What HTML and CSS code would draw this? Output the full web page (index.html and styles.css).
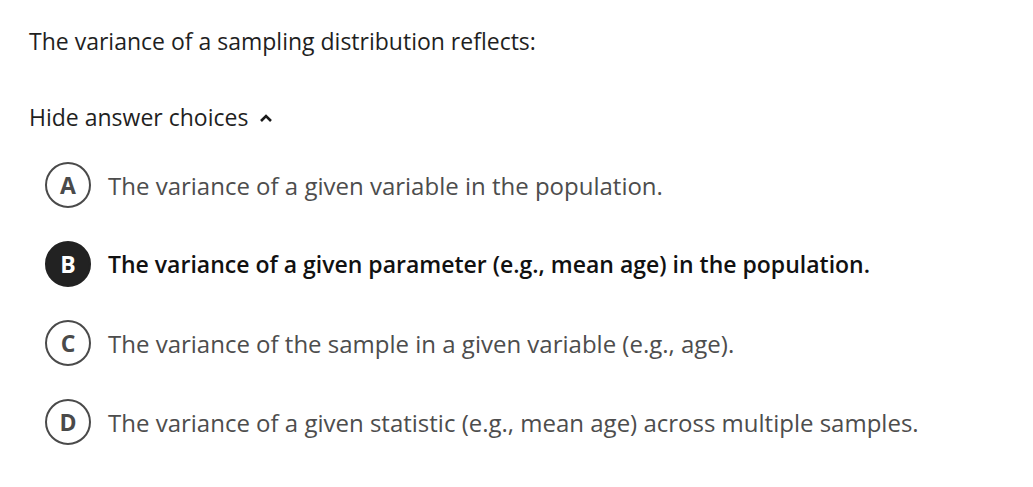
FILE: index.html
```html
<!DOCTYPE html>
<html>
<head>
<meta charset="utf-8">
<link rel="stylesheet" href="styles.css">
</head>
<body>
<div class="page">
  <p class="question">The variance of a sampling distribution reflects:</p>
  <div class="toggle">Hide answer choices
    <svg class="chev" width="14" height="10" viewBox="0 0 14 10"><path d="M2 8 L7 3 L12 8" fill="none" stroke="#1a1a1a" stroke-width="2.6"/></svg>
  </div>
  <ul class="choices">
    <li class="choice"><span class="letter">A</span><span class="text">The variance of a given variable in the population.</span></li>
    <li class="choice selected"><span class="letter">B</span><span class="text">The variance of a given parameter (e.g., mean age) in the population.</span></li>
    <li class="choice"><span class="letter">C</span><span class="text">The variance of the sample in a given variable (e.g., age).</span></li>
    <li class="choice"><span class="letter">D</span><span class="text">The variance of a given statistic (e.g., mean age) across multiple samples.</span></li>
  </ul>
</div>
</body>
</html>
```
FILE: styles.css
```css
html, body {
  margin: 0;
  padding: 0;
  background: #fff;
}
body {
  font-family: "Open Sans", "Noto Sans", sans-serif;
  color: #1f1f1f;
}
.page {
  padding: 24px 0 0 29px;
}
.question {
  margin: 0;
  font-size: 23px;
  line-height: 34px;
  color: #1f1f1f;
}
.toggle {
  margin-top: 42px;
  font-size: 23px;
  line-height: 34px;
  color: #1f1f1f;
  display: flex;
  align-items: center;
  gap: 11px;
}
.chev {
  margin-top: 2px;
}
.choices {
  list-style: none;
  margin: 28px 0 0 0;
  padding: 0 0 0 16px;
  display: flex;
  flex-direction: column;
  gap: 33px;
}
.choice {
  display: flex;
  align-items: center;
  gap: 17px;
  height: 46px;
}
.letter {
  box-sizing: border-box;
  width: 46px;
  height: 46px;
  border: 2px solid #4a4a4a;
  border-radius: 50%;
  display: flex;
  align-items: center;
  justify-content: center;
  font-size: 23px;
  font-weight: 700;
  color: #4a4a4a;
}
.text {
  font-size: 24px;
  color: #4d4d4d;
}
.selected .letter {
  background: #222;
  border-color: #222;
  color: #fff;
}
.selected .text {
  font-size: 23px;
  color: #111;
  font-weight: 600;
}
```
